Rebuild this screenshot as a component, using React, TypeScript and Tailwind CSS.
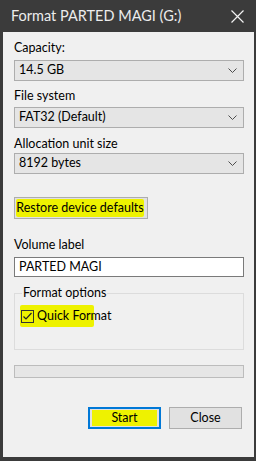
import React from 'react';

const Chevron = () => (
  <svg width="9" height="5" viewBox="0 0 9 5" className="shrink-0">
    <path d="M0.5 0.5 L4.5 4.5 L8.5 0.5" fill="none" stroke="#4d4d4d" strokeWidth="1" />
  </svg>
);

type SelectProps = { value: string; className?: string };

const Select: React.FC<SelectProps> = ({ value, className = '' }) => (
  <div
    className={`flex h-[21px] items-center justify-between border border-[#adadad] bg-[#e5e5e5] pl-[4px] pr-[6px] ${className}`}
  >
    <span>{value}</span>
    <Chevron />
  </div>
);

const Label: React.FC<{ children: React.ReactNode; className?: string }> = ({
  children,
  className = '',
}) => <div className={`h-[16px] leading-[16px] ${className}`}>{children}</div>;

export default function App() {
  return (
    <div
      className="flex h-[461px] w-[256px] flex-col whitespace-nowrap bg-[#3b3b3b] pb-[4px] pl-[3px] pr-[2px] text-[12.5px] text-black"
      style={{ fontFamily: 'Lato, "Noto Sans", sans-serif' }}
    >
      {/* title bar */}
      <div className="flex h-[32px] shrink-0 items-center justify-between pl-[8px] pr-[10px]">
        <span className="text-[14.5px] text-[#ececec]">Format PARTED MAGI (G:)</span>
        <svg width="13" height="13" viewBox="0 0 13 13">
          <path d="M0.5 0.5 L12.5 12.5 M12.5 0.5 L0.5 12.5" stroke="#f2f2f2" strokeWidth="1.2" />
        </svg>
      </div>

      {/* body */}
      <div className="flex flex-1 flex-col bg-[#f0f0f0] pl-[11px] pr-[10px]">
        <Label className="mt-[8px]">Capacity:</Label>
        <Select value="14.5 GB" className="mt-[4px]" />

        <Label className="mt-[7px]">File system</Label>
        <Select value="FAT32 (Default)" className="mt-[3px]" />

        <Label className="mt-[8px]">Allocation unit size</Label>
        <Select value="8192 bytes" className="mt-[1px]" />

        <div className="mt-[23px] flex h-[22px] w-[134px] items-center border border-[#adadad] bg-[#e1e1e1] px-[1px]">
          <div className="flex h-[18px] w-[128px] items-center justify-center rounded-[2px] bg-[#eef200]">
            Restore device defaults
          </div>
        </div>

        <Label className="mt-[18px]">Volume label</Label>
        <div className="mt-[4px] flex h-[20px] items-center border border-[#7a7a7a] bg-white pl-[4px]">
          PARTED MAGI
        </div>

        <div className="relative mt-[16px] h-[57px] border border-[#dcdcdc]">
          <span className="absolute left-[7px] top-[-9px] bg-[#f0f0f0] px-[1px] leading-[16px]">
            Format options
          </span>
          <div className="ml-[5px] mt-[11px] flex h-[22px] w-[74px] items-center rounded-[2px] bg-[#eef200] pl-[1px]">
            <div className="flex h-[13px] w-[13px] shrink-0 items-center justify-center border border-[#333333]">
              <svg width="11" height="11" viewBox="0 0 11 11">
                <path d="M1.5 5.5 L4 8 L9.5 2" fill="none" stroke="#222" strokeWidth="1.2" />
              </svg>
            </div>
            <span className="ml-[3px]">Quick Format</span>
          </div>
        </div>

        <div className="mt-[15px] h-[13px] border border-[#bcbcbc] bg-[#e6e6e6]" />

        <div className="mt-[29px] flex justify-end gap-[8px] pr-[2px]">
          <div className="flex h-[22px] w-[73px] items-center justify-center border-2 border-[#0078d7] bg-[#e1e1e1]">
            <div className="flex h-[16px] w-[65px] items-center justify-center bg-[#eef200]">Start</div>
          </div>
          <div className="flex h-[22px] w-[73px] items-center justify-center border border-[#adadad] bg-[#e1e1e1]">
            Close
          </div>
        </div>
      </div>
    </div>
  );
}
